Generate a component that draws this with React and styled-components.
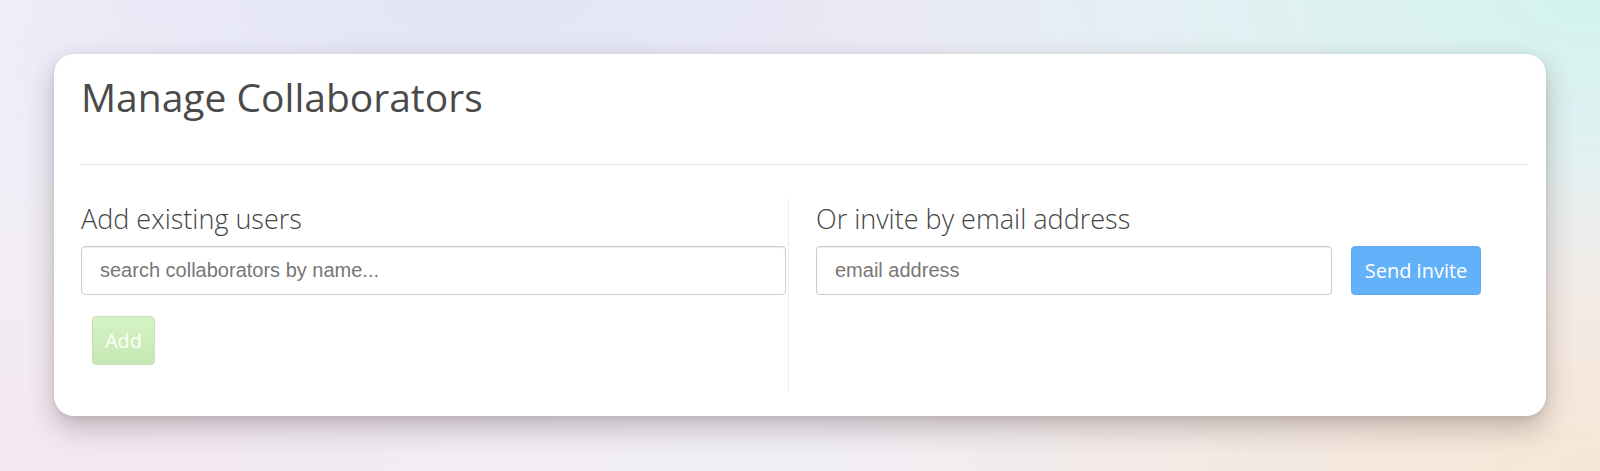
import styled, { createGlobalStyle } from "styled-components";

const GlobalStyles = createGlobalStyle`
  html, body {
    margin: 0;
    padding: 0;
    height: 100%;
  }
  body {
    font-family: "Open Sans", "Liberation Sans", sans-serif;
    background:
      radial-gradient(ellipse 45% 60% at 0% 100%, #f4e8f1 0%, rgba(244, 232, 241, 0) 100%),
      radial-gradient(ellipse 50% 70% at 100% 100%, #f6e6d4 0%, rgba(246, 230, 212, 0) 100%),
      radial-gradient(ellipse 45% 70% at 100% 0%, #d2f3ef 0%, rgba(210, 243, 239, 0) 100%),
      radial-gradient(ellipse 50% 60% at 30% 0%, #e2e4f5 0%, rgba(226, 228, 245, 0) 100%),
      radial-gradient(ellipse 30% 40% at 0% 0%, #f7f3fc 0%, rgba(247, 243, 252, 0) 100%),
      #f1eef6;
  }
`;

const Page = styled.div`
  box-sizing: border-box;
  width: 1600px;
  height: 471px;
  padding: 54px 54px 0 54px;
`;

const Card = styled.div`
  box-sizing: border-box;
  width: 1492px;
  height: 362px;
  background: #fff;
  border-radius: 20px;
  padding: 0 19px 0 27px;
  box-shadow: 0 12px 28px rgba(60, 40, 40, 0.28), 0 2px 6px rgba(0, 0, 0, 0.08);
`;

const Header = styled.div`
  height: 111px;
  box-sizing: border-box;
  padding-top: 16px;
  border-bottom: 1.5px solid #e6e6e6;
`;

const Title = styled.h1`
  margin: 0;
  font-family: "Open Sans", sans-serif;
  font-weight: 400;
  font-size: 39px;
  line-height: 53px;
  color: #4a4a4a;
`;

const Body = styled.div`
  display: grid;
  grid-template-columns: 708px 1fr;
  margin-top: 34px;
`;

const Column = styled.div`
  box-sizing: border-box;
  min-height: 192px;
  padding-left: ${(p) => (p.$divided ? "0" : "27px")};
  padding-right: ${(p) => (p.$divided ? "2px" : "0")};
  border-right: ${(p) => (p.$divided ? "1px solid #ececec" : "none")};
`;

const SectionTitle = styled.h2`
  margin: 0 0 10px;
  padding-top: 2px;
  font-family: "Open Sans", sans-serif;
  font-weight: 300;
  font-size: 27px;
  line-height: 35px;
  color: #444;
`;

const Input = styled.input`
  box-sizing: border-box;
  display: block;
  width: ${(p) => p.$width || "100%"};
  height: 49px;
  padding: 0 18px;
  border: 1px solid #cccccc;
  border-radius: 4px;
  box-shadow: inset 0 1px 1px rgba(0, 0, 0, 0.075);
  font-family: "Liberation Sans", Arial, sans-serif;
  font-size: 20px;
  color: #555;
  background: #fff;
  outline: none;

  &::placeholder {
    color: #777;
  }
`;

const InviteRow = styled.div`
  display: flex;
  align-items: center;
  gap: 19px;
`;

const Button = styled.button`
  box-sizing: border-box;
  height: 49px;
  padding: 0;
  border-radius: 4px;
  font-family: "Open Sans", sans-serif;
  font-size: 20px;
  white-space: nowrap;
  text-align: center;
  color: #fff;
  cursor: pointer;
`;

const AddButton = styled(Button)`
  display: block;
  margin: 21px 0 0 11px;
  width: 63px;
  border: 1px solid #c8dfbc;
  background: linear-gradient(#d4f5c3, #c6e6b4);
  cursor: not-allowed;
`;

const SendButton = styled(Button)`
  width: 130px;
  border: 1px solid #5aacf6;
  background: #63b1f8;
`;

const App = () => {
  return (
    <>
      <GlobalStyles />
      <Page>
        <Card>
          <Header>
            <Title>Manage Collaborators</Title>
          </Header>
          <Body>
            <Column $divided>
              <SectionTitle>Add existing users</SectionTitle>
              <Input placeholder="search collaborators by name..." />
              <AddButton disabled>Add</AddButton>
            </Column>
            <Column>
              <SectionTitle>Or invite by email address</SectionTitle>
              <InviteRow>
                <Input $width="516px" type="email" placeholder="email address" />
                <SendButton>Send invite</SendButton>
              </InviteRow>
            </Column>
          </Body>
        </Card>
      </Page>
    </>
  );
};

export default App;
